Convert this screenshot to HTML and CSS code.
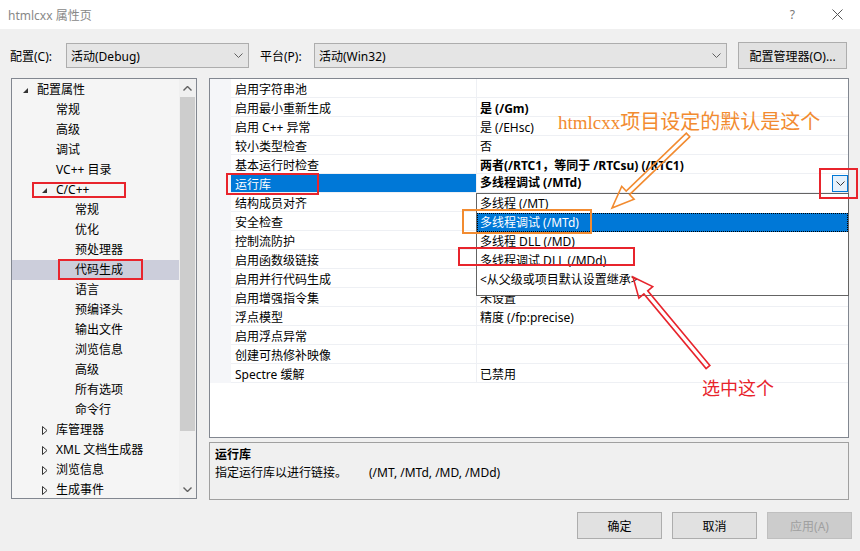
FILE: index.html
```html
<!DOCTYPE html>
<html lang="zh-CN">
<head>
    <meta charset="UTF-8">
    <meta name="viewport" content="width=device-width, initial-scale=1.0">
    <title>htmlcxx 属性页</title>
    <link rel="stylesheet" href="styles.css">
</head>
<body>

    <div class="titlebar">
        <span class="title">htmlcxx 属性页</span>
        <span class="help">?</span>
        <svg class="close" width="11" height="11" viewBox="0 0 11 11"><path d="M0.5 0.5 L10.5 10.5 M10.5 0.5 L0.5 10.5" stroke="#555" stroke-width="1" fill="none"/></svg>
    </div>

    <div class="toolbar">
        <label class="lbl">配置(C):</label>
        <div class="combo combo-cfg">
            <span>活动(Debug)</span>
            <svg class="chev" width="9" height="5" viewBox="0 0 9 5"><path d="M0.5 0.5 L4.5 4.5 L8.5 0.5" stroke="#606060" fill="none"/></svg>
        </div>
        <label class="lbl lbl-plat">平台(P):</label>
        <div class="combo combo-plat">
            <span>活动(Win32)</span>
            <svg class="chev" width="9" height="5" viewBox="0 0 9 5"><path d="M0.5 0.5 L4.5 4.5 L8.5 0.5" stroke="#606060" fill="none"/></svg>
        </div>
        <button class="btn btn-mgr">配置管理器(O)...</button>
    </div>

    <div class="main">
        <div class="tree">
            <ul class="tree-list">
                <li class="node lv0"><span class="tri-open"></span>配置属性</li>
                <li class="node lv1">常规</li>
                <li class="node lv1">高级</li>
                <li class="node lv1">调试</li>
                <li class="node lv1">VC++ 目录</li>
                <li class="node lv1x"><span class="tri-open"></span>C/C++</li>
                <li class="node lv2">常规</li>
                <li class="node lv2">优化</li>
                <li class="node lv2">预处理器</li>
                <li class="node lv2 selected">代码生成</li>
                <li class="node lv2">语言</li>
                <li class="node lv2">预编译头</li>
                <li class="node lv2">输出文件</li>
                <li class="node lv2">浏览信息</li>
                <li class="node lv2">高级</li>
                <li class="node lv2">所有选项</li>
                <li class="node lv2">命令行</li>
                <li class="node lv1x"><svg class="tri-closed" width="6" height="9" viewBox="0 0 6 9"><path d="M0.5 0.5 L5 4.5 L0.5 8.5 Z" stroke="#333" fill="none"/></svg>库管理器</li>
                <li class="node lv1x"><svg class="tri-closed" width="6" height="9" viewBox="0 0 6 9"><path d="M0.5 0.5 L5 4.5 L0.5 8.5 Z" stroke="#333" fill="none"/></svg>XML 文档生成器</li>
                <li class="node lv1x"><svg class="tri-closed" width="6" height="9" viewBox="0 0 6 9"><path d="M0.5 0.5 L5 4.5 L0.5 8.5 Z" stroke="#333" fill="none"/></svg>浏览信息</li>
                <li class="node lv1x"><svg class="tri-closed" width="6" height="9" viewBox="0 0 6 9"><path d="M0.5 0.5 L5 4.5 L0.5 8.5 Z" stroke="#333" fill="none"/></svg>生成事件</li>
            </ul>
            <div class="scrollbar">
                <div class="sb-btn"><svg width="9" height="5" viewBox="0 0 9 5"><path d="M0.5 4.5 L4.5 0.5 L8.5 4.5" stroke="#606060" stroke-width="1.4" fill="none"/></svg></div>
                <div class="sb-thumb"></div>
                <div class="sb-track"></div>
                <div class="sb-btn"><svg width="9" height="5" viewBox="0 0 9 5"><path d="M0.5 0.5 L4.5 4.5 L8.5 0.5" stroke="#606060" stroke-width="1.4" fill="none"/></svg></div>
            </div>
        </div>

        <div class="right">
            <div class="grid">
                <div class="row"><div class="gut"></div><div class="name">启用字符串池</div><div class="val"></div></div>
                <div class="row"><div class="gut"></div><div class="name">启用最小重新生成</div><div class="val b">是 (/Gm)</div></div>
                <div class="row"><div class="gut"></div><div class="name">启用 C++ 异常</div><div class="val">是 (/EHsc)</div></div>
                <div class="row"><div class="gut"></div><div class="name">较小类型检查</div><div class="val">否</div></div>
                <div class="row"><div class="gut"></div><div class="name">基本运行时检查</div><div class="val b">两者(/RTC1，等同于 /RTCsu) (/RTC1)</div></div>
                <div class="row current"><div class="gut"></div><div class="name">运行库</div><div class="val b">多线程调试 (/MTd)<span class="drop-btn"><svg width="9" height="5" viewBox="0 0 9 5"><path d="M0.5 0.5 L4.5 4.5 L8.5 0.5" stroke="#333" fill="none"/></svg></span></div></div>
                <div class="row"><div class="gut"></div><div class="name">结构成员对齐</div><div class="val"></div></div>
                <div class="row"><div class="gut"></div><div class="name">安全检查</div><div class="val"></div></div>
                <div class="row"><div class="gut"></div><div class="name">控制流防护</div><div class="val"></div></div>
                <div class="row"><div class="gut"></div><div class="name">启用函数级链接</div><div class="val"></div></div>
                <div class="row"><div class="gut"></div><div class="name">启用并行代码生成</div><div class="val"></div></div>
                <div class="row"><div class="gut"></div><div class="name">启用增强指令集</div><div class="val">未设置</div></div>
                <div class="row"><div class="gut"></div><div class="name">浮点模型</div><div class="val">精度 (/fp:precise)</div></div>
                <div class="row"><div class="gut"></div><div class="name">启用浮点异常</div><div class="val"></div></div>
                <div class="row"><div class="gut"></div><div class="name">创建可热修补映像</div><div class="val"></div></div>
                <div class="row"><div class="gut"></div><div class="name">Spectre 缓解</div><div class="val">已禁用</div></div>
            </div>
            <div class="desc">
                <p class="desc-title">运行库</p>
                <p class="desc-text">指定运行库以进行链接。<span class="desc-opts">(/MT, /MTd, /MD, /MDd)</span></p>
            </div>
        </div>
    </div>

    <div class="buttons">
        <button class="btn btn-dlg">确定</button>
        <button class="btn btn-dlg">取消</button>
        <button class="btn btn-dlg" disabled>应用(A)</button>
    </div>

    <!-- 下拉列表和标注 -->
    <ul class="droplist">
        <li>多线程 (/MT)</li>
        <li class="hot">多线程调试 (/MTd)</li>
        <li>多线程 DLL (/MD)</li>
        <li>多线程调试 DLL (/MDd)</li>
        <li>&lt;从父级或项目默认设置继承&gt;</li>
    </ul>

    <div class="box box-cc"></div>
    <div class="box box-gen"></div>
    <div class="box box-rtlib"></div>
    <div class="box box-drop"></div>
    <div class="box box-mdd"></div>
    <div class="box box-mtd"></div>

    <p class="note note-default"><span class="lat">htmlcxx</span>项目设定的默认是这个</p>
    <p class="note note-pick">选中这个</p>

    <svg class="arrows" width="860" height="551" viewBox="0 0 860 551">
        <polygon points="689.7,136.8 629.6,194.6 634.1,199.3 612,208 621.7,186.3 626.2,191 686.3,133.2" fill="none" stroke="#f28b30" stroke-width="1.6"/>
        <polygon points="709.9,365.4 647.7,290.8 652.7,286.6 633,277 638.9,298.2 643.9,294 706.1,368.6" fill="none" stroke="#e8242c" stroke-width="1.6"/>
    </svg>

</body>
</html>
```

FILE: styles.css
```css
*{
    margin: 0;
    padding: 0;
    box-sizing: border-box;
}

body{
    width: 860px;
    height: 551px;
    overflow: hidden;
    position: relative;
    background: #f0f0f0;
    font-family: "Noto Sans", "Noto Sans CJK SC", sans-serif;
    font-size: 12px;
    color: #000;
}

ul{
    list-style: none;
}

/* barra de titulo */
.titlebar{
    height: 29px;
    background: #fff;
    display: flex;
    align-items: center;
    padding: 0 17px 0 8px;
}

.title{
    color: #888;
}

.help{
    margin-left: auto;
    color: #777;
    margin-right: 37px;
}

.close{
    display: block;
}

/* linha de configuracao */
.toolbar{
    display: flex;
    align-items: center;
    height: 27px;
    margin-top: 13px;
    padding-left: 10px;
}

.lbl{
    width: 56px;
}

.lbl-plat{
    margin-left: 11px;
    width: 54px;
}

.combo{
    height: 25px;
    background: #e5e5e5;
    border: 1px solid #adadad;
    display: flex;
    align-items: center;
    padding: 0 5px 0 4px;
}

.combo span{
    flex: 1;
}

.combo-cfg{
    width: 183px;
}

.combo-plat{
    width: 413px;
}

.btn{
    font-family: "Noto Sans", "Noto Sans CJK SC", sans-serif;
    font-size: 12px;
    color: #000;
    background: #e1e1e1;
    border: 1px solid #adadad;
}

.btn-mgr{
    margin-left: 11px;
    width: 109px;
    height: 27px;
}

/* arvore */
.main{
    display: flex;
    margin-top: 9px;
    padding-left: 11px;
    height: 422px;
}

.tree{
    width: 186px;
    height: 421px;
    border: 1px solid #828790;
    background: #f5f5f5;
    display: flex;
}

.tree-list{
    flex: 1;
    padding-top: 1px;
    overflow: hidden;
}

.node{
    height: 20px;
    line-height: 20px;
    white-space: nowrap;
    display: flex;
    align-items: center;
}

.lv0{ padding-left: 11px; }
.lv1{ padding-left: 44px; }
.lv1x{ padding-left: 30px; }
.lv2{ padding-left: 63px; }

.selected{
    background: #cccedb;
}

.tri-open{
    width: 0;
    height: 0;
    border-left: 5px solid transparent;
    border-bottom: 5px solid #333;
    margin-right: 9px;
    margin-top: 1px;
}

.tri-closed{
    margin-right: 8px;
}

.scrollbar{
    width: 17px;
    display: flex;
    flex-direction: column;
    background: #f0f0f0;
}

.sb-btn{
    height: 18px;
    display: flex;
    align-items: center;
    justify-content: center;
}

.sb-thumb{
    height: 334px;
    margin: 0 1px;
    background: #cdcdcd;
}

.sb-track{
    flex: 1;
}

/* grade de propriedades */
.right{
    margin-left: 12px;
    width: 640px;
    display: flex;
    flex-direction: column;
}

.grid{
    height: 360px;
    border: 1px solid #828790;
    background: #fff;
}

.row{
    display: grid;
    grid-template-columns: 21px 246px 1fr;
    height: 19px;
}

.gut{
    background: #f5f6f9;
}

.name, .val{
    border-bottom: 1px solid #eef0f4;
    line-height: 18px;
    padding-top: 2px;
    white-space: nowrap;
    overflow: hidden;
}

.name{
    padding-left: 4px;
    border-right: 1px solid #eef0f4;
}

.val{
    padding-left: 3px;
    display: flex;
    align-items: flex-start;
}

.b{
    font-weight: bold;
}

.current .name{
    background: #0078d7;
    color: #fff;
}

.current .val{
    padding-top: 0;
    align-items: center;
}

.current .val::before{
    content: "";
}

.drop-btn{
    margin-left: auto;
    width: 16px;
    height: 17px;
    border: 1px solid #0078d7;
    background: #e5f1fb;
    display: flex;
    align-items: center;
    justify-content: center;
}

/* descricao */
.desc{
    margin-top: 4px;
    height: 58px;
    border: 1px solid #a0a0a0;
    padding: 3px 5px;
}

.desc-title{
    font-weight: bold;
    line-height: 18px;
}

.desc-text{
    line-height: 18px;
}

.desc-opts{
    padding-left: 22px;
}

/* botoes */
.buttons{
    display: flex;
    justify-content: flex-end;
    gap: 10px;
    margin-top: 12px;
    padding-right: 8px;
}

.btn-dlg{
    width: 85px;
    height: 27px;
}

.btn-dlg:disabled{
    color: #a0a0a0;
    background: #cccccc;
    border-color: #bfbfbf;
}

/* lista aberta do combo */
.droplist{
    position: absolute;
    left: 476px;
    top: 193px;
    width: 373px;
    height: 103px;
    background: #fff;
    border: 1px solid #646464;
}

.droplist li{
    height: 19px;
    line-height: 19px;
    padding-left: 3px;
    white-space: nowrap;
}

.droplist .hot{
    background: #0078d7;
    color: #fff;
    outline: 1px dotted #000;
    outline-offset: -1px;
}

/* marcacoes */
.box{
    position: absolute;
    border: 2px solid #e8242c;
}

.box-cc{ left: 32px; top: 182px; width: 94px; height: 16px; }
.box-gen{ left: 58px; top: 259px; width: 85px; height: 21px; }
.box-rtlib{ left: 226px; top: 173px; width: 93px; height: 22px; }
.box-drop{ left: 819px; top: 168px; width: 39px; height: 31px; }
.box-mdd{ left: 458px; top: 247px; width: 177px; height: 19px; }
.box-mtd{ left: 462px; top: 209px; width: 130px; height: 25px; border-color: #f28b30; }

.note{
    position: absolute;
    white-space: nowrap;
    font-family: "Liberation Serif", "Noto Sans CJK SC", serif;
}

.note-default{
    left: 558px;
    top: 110px;
    font-size: 20px;
    line-height: 24px;
    color: #f28b30;
}

.note-default .lat{
    font-size: 19px;
}

.note-pick{
    left: 702px;
    top: 378px;
    font-size: 18px;
    line-height: 22px;
    color: #e8242c;
}

.arrows{
    position: absolute;
    left: 0;
    top: 0;
    pointer-events: none;
}
```
